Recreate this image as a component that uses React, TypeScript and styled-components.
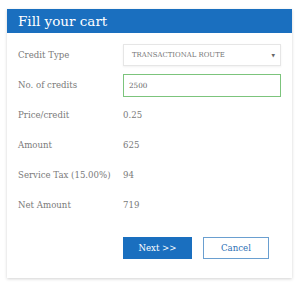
import React from 'react'
import styled, { createGlobalStyle } from 'styled-components'

const GlobalStyle = createGlobalStyle`
  html, body {
    margin: 0;
    padding: 0;
    background: #ffffff;
  }
  body {
    font-family: 'DejaVu Serif', 'Liberation Serif', serif;
  }
`

const Page = styled.div`
  padding: 9px 8px 8px 7px;
`

const Card = styled.div`
  width: 285px;
  height: 269px;
  box-sizing: border-box;
  background: #fff;
  box-shadow: 0 1px 3px rgba(0, 0, 0, 0.18);
  display: flex;
  flex-direction: column;
`

const Header = styled.div`
  height: 24px;
  background: #1a6fbf;
  color: #fff;
  font-size: 13.5px;
  display: flex;
  align-items: center;
  padding-left: 11px;
`

const Body = styled.div`
  padding: 7px 11px 0 11px;
  display: flex;
  flex-direction: column;
`

const Row = styled.div`
  display: grid;
  grid-template-columns: 105px 158px;
  align-items: center;
  height: 30px;
`

const Label = styled.div`
  color: #7a7a7a;
  font-size: 8.6px;
  white-space: nowrap;
`

const Value = styled.div`
  color: #7a7a7a;
  font-size: 8.6px;
`

const Select = styled.div`
  height: 22px;
  box-sizing: border-box;
  border: 1px solid #e6e6e6;
  box-shadow: 0 1px 2px rgba(0, 0, 0, 0.06);
  display: flex;
  align-items: center;
  justify-content: space-between;
  padding: 0 5px 0 8px;
  color: #777;
  font-size: 6.9px;
`

const Caret = styled.span`
  font-size: 4.5px;
  color: #666;
`

const Input = styled.div`
  height: 23px;
  box-sizing: border-box;
  border: 1px solid #7cc47c;
  display: flex;
  align-items: center;
  padding-left: 5px;
  color: #666;
  font-size: 7.2px;
`

const Actions = styled.div`
  display: flex;
  gap: 11px;
  padding: 17px 0 0 105px;
`

const Button = styled.button<{ $primary?: boolean }>`
  height: 22px;
  box-sizing: border-box;
  font-family: inherit;
  font-size: 8.6px;
  padding: 0;
  cursor: pointer;
  border: 1px solid ${({ $primary }) => ($primary ? '#1a6fbf' : '#6a9fd0')};
  background: ${({ $primary }) => ($primary ? '#1a6fbf' : '#fff')};
  color: ${({ $primary }) => ($primary ? '#fff' : '#2c6fb5')};
  width: ${({ $primary }) => ($primary ? 69 : 66)}px;
`

const rows = [
  { label: 'Price/credit', value: '0.25' },
  { label: 'Amount', value: '625' },
  { label: 'Service Tax (15.00%)', value: '94' },
  { label: 'Net Amount', value: '719' },
]

const App = () => {
  return (
    <>
      <GlobalStyle />
      <Page>
        <Card>
          <Header>Fill your cart</Header>
          <Body>
            <Row>
              <Label>Credit Type</Label>
              <Select>
                TRANSACTIONAL ROUTE
                <Caret>▼</Caret>
              </Select>
            </Row>
            <Row>
              <Label>No. of credits</Label>
              <Input>2500</Input>
            </Row>
            {rows.map((r) => (
              <Row key={r.label}>
                <Label>{r.label}</Label>
                <Value>{r.value}</Value>
              </Row>
            ))}
            <Actions>
              <Button $primary>Next &gt;&gt;</Button>
              <Button>Cancel</Button>
            </Actions>
          </Body>
        </Card>
      </Page>
    </>
  )
}

export default App
